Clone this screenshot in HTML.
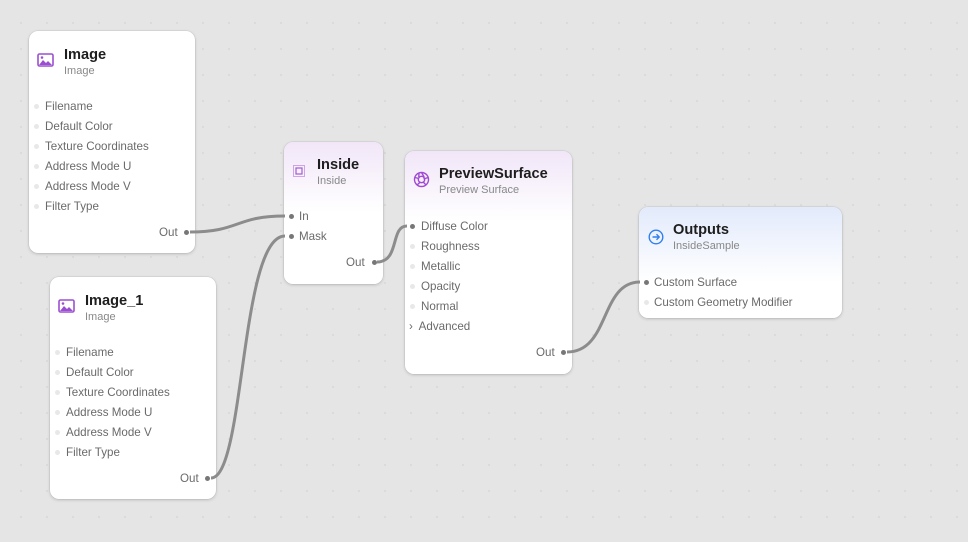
<!DOCTYPE html>
<html><head><style>
*{margin:0;padding:0;box-sizing:border-box}
body{width:968px;height:542px;overflow:hidden;background:#e5e5e5;font-family:"Liberation Sans",sans-serif;position:relative;
background-image:radial-gradient(circle,#dadada 1px,transparent 1.3px);background-size:26px 26px;background-position:8px 10px}
.n{position:absolute;background:#fff;border-radius:9px;box-shadow:0 1px 3px rgba(0,0,0,.18),0 0 0 .5px rgba(0,0,0,.08)}
.p{background:linear-gradient(#f1e6f8,#fff 70px)}
.b{background:linear-gradient(#e2eafb,#fff 75px)}
.t{position:absolute;font-size:14.6px;font-weight:bold;color:#1e1e1e}
.s{position:absolute;font-size:11px;color:#888}
.r{position:absolute;font-size:11.6px;color:#6a6a6a;white-space:nowrap}
.d{position:absolute;width:5px;height:5px;border-radius:50%;background:#e8e8e8}
.d.a{background:#777}
svg.w{position:absolute;left:0;top:0;z-index:5}
</style></head><body>
<svg class="w" width="968" height="542"><g fill="none" stroke="#8c8c8c" stroke-width="3">
<path d="M190 232 C240 232 235 216 285 216"/>
<path d="M211 478 C245 478 240 236 285 236"/>
<path d="M377 262 C400 262 390 226 407 226"/>
<path d="M567 352 C610 352 600 282 640 282"/>
</g></svg>

<div class="n" style="left:29px;top:31px;width:166px;height:222px">
<svg style="position:absolute;left:8px;top:22px" width="17" height="14" viewBox="0 0 17 14"><rect x="1" y="1" width="15" height="12" rx="1.5" fill="none" stroke="#9b4fd0" stroke-width="1.6"/><path d="M2 12 L6 7 L9 10 L11 8 L15 12Z" fill="#9b4fd0"/><circle cx="5" cy="4.5" r="1.3" fill="#9b4fd0"/></svg>
<div class="t" style="left:35px;top:16px">Image</div><div class="s" style="left:35px;top:34px">Image</div>
<i class="d" style="left:5px;top:73px"></i><div class="r" style="left:16px;top:69px">Filename</div>
<i class="d" style="left:5px;top:93px"></i><div class="r" style="left:16px;top:89px">Default Color</div>
<i class="d" style="left:5px;top:113px"></i><div class="r" style="left:16px;top:109px">Texture Coordinates</div>
<i class="d" style="left:5px;top:133px"></i><div class="r" style="left:16px;top:129px">Address Mode U</div>
<i class="d" style="left:5px;top:153px"></i><div class="r" style="left:16px;top:149px">Address Mode V</div>
<i class="d" style="left:5px;top:173px"></i><div class="r" style="left:16px;top:169px">Filter Type</div>
<div class="r" style="left:130px;top:195px">Out</div><i class="d a" style="left:155px;top:199px"></i>
</div>

<div class="n" style="left:50px;top:277px;width:166px;height:222px">
<svg style="position:absolute;left:8px;top:22px" width="17" height="14" viewBox="0 0 17 14"><rect x="1" y="1" width="15" height="12" rx="1.5" fill="none" stroke="#9b4fd0" stroke-width="1.6"/><path d="M2 12 L6 7 L9 10 L11 8 L15 12Z" fill="#9b4fd0"/><circle cx="5" cy="4.5" r="1.3" fill="#9b4fd0"/></svg>
<div class="t" style="left:35px;top:16px">Image_1</div><div class="s" style="left:35px;top:34px">Image</div>
<i class="d" style="left:5px;top:73px"></i><div class="r" style="left:16px;top:69px">Filename</div>
<i class="d" style="left:5px;top:93px"></i><div class="r" style="left:16px;top:89px">Default Color</div>
<i class="d" style="left:5px;top:113px"></i><div class="r" style="left:16px;top:109px">Texture Coordinates</div>
<i class="d" style="left:5px;top:133px"></i><div class="r" style="left:16px;top:129px">Address Mode U</div>
<i class="d" style="left:5px;top:153px"></i><div class="r" style="left:16px;top:149px">Address Mode V</div>
<i class="d" style="left:5px;top:173px"></i><div class="r" style="left:16px;top:169px">Filter Type</div>
<div class="r" style="left:130px;top:195px">Out</div><i class="d a" style="left:155px;top:199px"></i>
</div>

<div class="n p" style="left:284px;top:142px;width:99px;height:142px">
<svg style="position:absolute;left:9px;top:23px" width="12" height="12" viewBox="0 0 12 12"><rect x=".5" y=".5" width="11" height="11" fill="none" stroke="#a45ad6" stroke-dasharray="1 1"/><rect x="3" y="3" width="6" height="6" fill="none" stroke="#a45ad6" stroke-width="1.2"/></svg>
<div class="t" style="left:33px;top:15px">Inside</div><div class="s" style="left:33px;top:33px">Inside</div>
<i class="d a" style="left:5px;top:72px"></i><div class="r" style="left:15px;top:68px">In</div>
<i class="d a" style="left:5px;top:92px"></i><div class="r" style="left:15px;top:88px">Mask</div>
<div class="r" style="left:62px;top:114px">Out</div><i class="d a" style="left:88px;top:118px"></i>
</div>

<div class="n p" style="left:405px;top:151px;width:167px;height:223px">
<svg style="position:absolute;left:8px;top:20px" width="17" height="17" viewBox="0 0 17 17" fill="none" stroke="#a04ad4" stroke-width="1.4"><circle cx="8.5" cy="8.5" r="7"/><circle cx="8.5" cy="8.5" r="3.2"/><path d="M8.5 1.5 L11.2 6 M15.2 6.5 L10.5 8 M13 14 L10.2 11 M4 14 L7 11.3 M1.8 6.5 L6 7.5 M6 1.8 L5.8 6"/></svg>
<div class="t" style="left:34px;top:15px">PreviewSurface</div><div class="s" style="left:34px;top:33px">Preview Surface</div>
<i class="d a" style="left:5px;top:73px"></i><div class="r" style="left:16px;top:69px">Diffuse Color</div>
<i class="d" style="left:5px;top:93px"></i><div class="r" style="left:16px;top:89px">Roughness</div>
<i class="d" style="left:5px;top:113px"></i><div class="r" style="left:16px;top:109px">Metallic</div>
<i class="d" style="left:5px;top:133px"></i><div class="r" style="left:16px;top:129px">Opacity</div>
<i class="d" style="left:5px;top:153px"></i><div class="r" style="left:16px;top:149px">Normal</div>
<div class="r" style="left:4px;top:169px">›&nbsp; Advanced</div>
<div class="r" style="left:131px;top:195px">Out</div><i class="d a" style="left:156px;top:199px"></i>
</div>

<div class="n b" style="left:639px;top:207px;width:203px;height:111px">
<svg style="position:absolute;left:9px;top:22px" width="16" height="16" viewBox="0 0 16 16" fill="none" stroke="#2f7ff0" stroke-width="1.4"><circle cx="8" cy="8" r="6.8"/><path d="M4.5 8 H11 M8.5 5.2 L11.2 8 L8.5 10.8"/></svg>
<div class="t" style="left:34px;top:15px">Outputs</div><div class="s" style="left:34px;top:33px">InsideSample</div>
<i class="d a" style="left:5px;top:73px"></i><div class="r" style="left:15px;top:69px">Custom Surface</div>
<i class="d" style="left:5px;top:93px"></i><div class="r" style="left:15px;top:89px">Custom Geometry Modifier</div>
</div>
</body></html>
